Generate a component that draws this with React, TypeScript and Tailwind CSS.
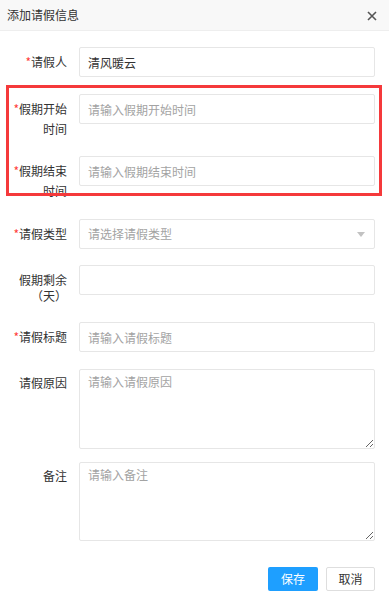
import { ReactNode } from 'react';

const font = { fontFamily: '"Noto Sans CJK SC", "Liberation Sans", sans-serif' };

function Label({ children, required, className = '' }: { children: ReactNode; required?: boolean; className?: string }) {
  return (
    <div className={`w-[55px] shrink-0 text-right text-[12px] text-[#333] ${className}`}>
      {required && <span className="text-[#ff3b3b]">*</span>}
      {children}
    </div>
  );
}

function TextInput({ value, placeholder }: { value?: string; placeholder?: string }) {
  return (
    <input
      readOnly
      defaultValue={value}
      placeholder={placeholder}
      className="h-[30px] flex-1 rounded-[2px] border border-[#e6e6e6] bg-white pl-[8px] text-[12px] text-[#333] outline-none placeholder:text-[#a3a3a3]"
      style={font}
    />
  );
}

export default function App() {
  return (
    <div className="relative h-[599px] w-[389px] bg-white" style={font}>
      <div className="flex h-[31px] items-center justify-between border-b border-[#eee] bg-[#f8f8f8] pl-[7px] pr-[12px]">
        <span className="text-[12px] text-[#333]">添加请假信息</span>
        <svg width="10" height="10" viewBox="0 0 10 10" className="mt-[1px]">
          <path d="M1 1 L9 9 M9 1 L1 9" stroke="#555" strokeWidth="1.6" />
        </svg>
      </div>

      <div className="flex flex-col pl-[12px] pr-[14px] pt-[16px]">
        <div className="flex gap-[12px]">
          <Label required className="leading-[30px]">请假人</Label>
          <TextInput value="清风暖云" />
        </div>

        <div className="mt-[17px] flex items-start gap-[12px]">
          <Label required className="pt-[5px] leading-[20px]">假期开始时间</Label>
          <TextInput placeholder="请输入假期开始时间" />
        </div>

        <div className="mt-[17px] flex items-start gap-[12px]">
          <Label required className="pt-[5px] leading-[20px]">假期结束时间</Label>
          <TextInput placeholder="请输入假期结束时间" />
        </div>

        <div className="mt-[18px] flex items-start gap-[12px]">
          <Label required className="leading-[30px]">请假类型</Label>
          <div className="relative flex h-[30px] flex-1 items-center rounded-[2px] border border-[#e6e6e6] bg-white pl-[8px] text-[12px] text-[#a3a3a3]">
            请选择请假类型
            <svg width="8" height="5" viewBox="0 0 8 5" className="absolute right-[9px] top-[12px]">
              <path d="M0 0 H8 L4 5 Z" fill="#c2c2c2" />
            </svg>
          </div>
        </div>

        <div className="mt-[16px] flex items-start gap-[12px]">
          <Label className="pt-[7px] leading-[16px]">假期剩余（天）</Label>
          <TextInput />
        </div>

        <div className="mt-[18px] flex items-start gap-[12px]">
          <Label required className="leading-[30px]">请假标题</Label>
          <TextInput placeholder="请输入请假标题" />
        </div>

        <div className="mt-[17px] flex items-start gap-[12px]">
          <Label className="pt-[4px] leading-[20px]">请假原因</Label>
          <textarea
            readOnly
            placeholder="请输入请假原因"
            className="h-[80px] flex-1 rounded-[2px] border border-[#e6e6e6] bg-white pl-[8px] pt-[3px] text-[12px] leading-[18px] outline-none placeholder:text-[#a3a3a3]"
            style={font}
          />
        </div>

        <div className="mt-[13px] flex items-start gap-[12px]">
          <Label className="pt-[4px] leading-[20px]">备注</Label>
          <textarea
            readOnly
            placeholder="请输入备注"
            className="h-[79px] flex-1 rounded-[2px] border border-[#e6e6e6] bg-white pl-[8px] pt-[3px] text-[12px] leading-[18px] outline-none placeholder:text-[#a3a3a3]"
            style={font}
          />
        </div>

        <div className="mt-[26px] flex justify-end gap-[8px]">
          <button className="h-[24px] w-[50px] rounded-[2px] bg-[#1e9fff] text-[12px] text-white">保存</button>
          <button className="h-[24px] w-[49px] rounded-[2px] border border-[#dedede] bg-white text-[12px] text-[#333]">取消</button>
        </div>
      </div>

      <div className="pointer-events-none absolute left-[6px] top-[85px] h-[111px] w-[376px] border-[3px] border-[#f5393b]" />
    </div>
  );
}
